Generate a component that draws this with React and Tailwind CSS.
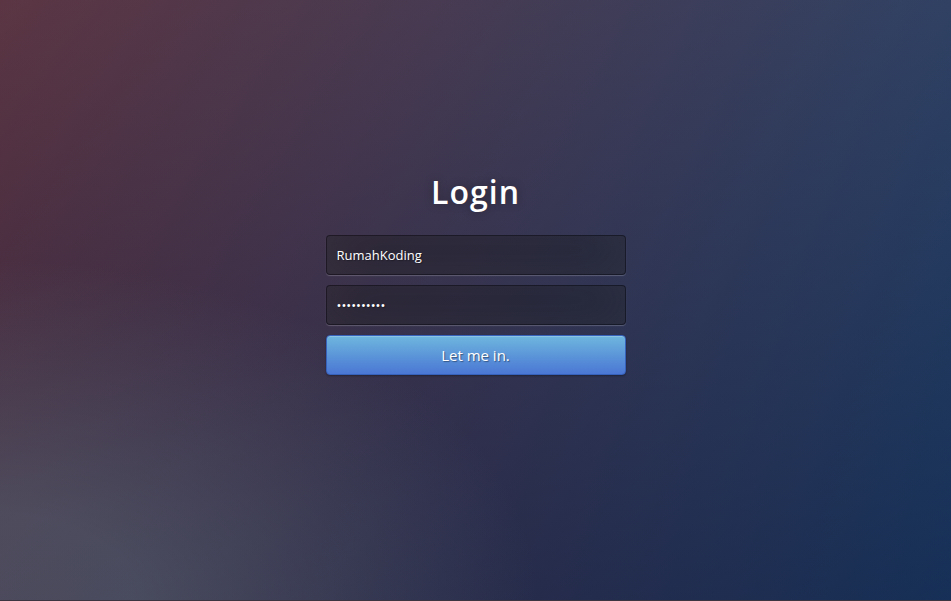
export default function App() {
  return (
    <div className="min-h-screen bg-[#3a3541]">
      <div
        className="h-[600px] w-full bg-[image:radial-gradient(ellipse_farthest-corner_at_0%_100%,rgba(104,128,138,.4)_10%,rgba(138,114,76,0)_40%),linear-gradient(to_bottom,rgba(57,173,219,.25)_0%,rgba(42,60,87,.4)_100%),linear-gradient(135deg,#670d10_0%,#092756_100%)] flex flex-col items-center pt-[172px] font-['Open_Sans',sans-serif]"
      >
        <div className="w-[300px] flex flex-col">
          <h1 className="text-center text-white text-[32px] leading-[40px] font-semibold tracking-[1px] [text-shadow:0_0_10px_rgba(0,0,0,0.3)] mb-[23px]">
            Login
          </h1>
          <input
            type="text"
            readOnly
            value="RumahKoding"
            className="w-full h-[40px] mb-[10px] px-[10px] text-[13px] text-white bg-black/30 border border-black/30 rounded-[4px] outline-none [text-shadow:1px_1px_1px_rgba(0,0,0,0.3)] shadow-[inset_0_-5px_45px_rgba(100,100,100,0.2),0_1px_1px_rgba(255,255,255,0.2)]"
          />
          <input
            type="password"
            readOnly
            value="rumahkodin"
            className="w-full h-[40px] mb-[10px] px-[10px] text-[13px] text-white bg-black/30 border border-black/30 rounded-[4px] outline-none [text-shadow:1px_1px_1px_rgba(0,0,0,0.3)] shadow-[inset_0_-5px_45px_rgba(100,100,100,0.2),0_1px_1px_rgba(255,255,255,0.2)]"
          />
          <button
            type="button"
            className="w-full h-[40px] text-[15px] text-white rounded-[4px] border border-[#3762bc] bg-[linear-gradient(to_bottom,#6eb6de,#4a77d4)] [text-shadow:1px_1px_1px_rgba(0,0,0,0.4)] shadow-[inset_0_1px_0_rgba(255,255,255,0.2),0_1px_2px_rgba(0,0,0,0.3)]"
          >
            Let me in.
          </button>
        </div>
      </div>
    </div>
  );
}
